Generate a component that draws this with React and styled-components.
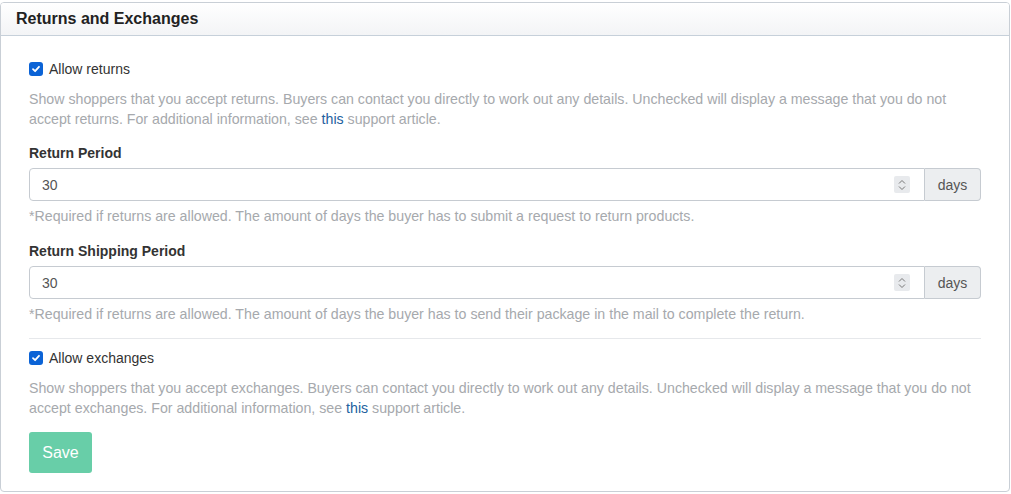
import React from 'react'
import styled, { createGlobalStyle } from 'styled-components'

const Global = createGlobalStyle`
  body { margin: 0; font-family: "Liberation Sans", Arial, sans-serif; background: #fff; }
`

const Card = styled.div`
  margin: 2px 0 0 0;
  width: 1010px;
  height: 490px;
  border: 1px solid #c9cfd6;
  border-radius: 4px;
  box-sizing: border-box;
  overflow: hidden;
`

const Header = styled.div`
  height: 33px;
  box-sizing: border-box;
  padding: 0 15px;
  display: flex;
  align-items: center;
  font-size: 16px;
  font-weight: bold;
  color: #222;
  background: linear-gradient(#ffffff, #f3f4f6);
  border-bottom: 1px solid #c6d0da;
`

const Body = styled.div`
  padding: 23px 28px 0 28px;
  display: flex;
  flex-direction: column;
`

const CheckRow = styled.label`
  display: flex;
  align-items: center;
  gap: 6px;
  font-size: 14px;
  color: #333;
  height: 20px;
`

const Box = styled.span`
  width: 14px;
  height: 14px;
  border-radius: 3px;
  background: #0b63d6;
  display: flex;
  align-items: center;
  justify-content: center;
`

const Desc = styled.p`
  margin: 10px 0 0 0;
  font-size: 14.2px;
  line-height: 20px;
  color: #a6a9ad;
  a { color: #23619e; text-decoration: none; }
`

const Label = styled.div`
  margin-top: ${p => p.$top}px;
  font-size: 14px;
  font-weight: bold;
  color: #333;
  line-height: 20px;
`

const Group = styled.div`
  display: flex;
  height: 33px;
  margin-top: 5px;
`

const Input = styled.div`
  flex: 1;
  border: 1px solid #c6cbd1;
  border-radius: 4px 0 0 4px;
  display: flex;
  align-items: center;
  justify-content: space-between;
  padding: 0 14px 0 12px;
  font-size: 14px;
  color: #555;
`

const Spin = styled.span`
  width: 16px;
  height: 17px;
  background: #e8eaed;
  border-radius: 2px;
  display: flex;
  align-items: center;
  justify-content: center;
`

const Addon = styled.div`
  width: 56px;
  box-sizing: border-box;
  border: 1px solid #c6cbd1;
  border-left: none;
  border-radius: 0 4px 4px 0;
  background: #eceef0;
  display: flex;
  align-items: center;
  justify-content: center;
  font-size: 14px;
  color: #555;
`

const Help = styled.div`
  margin-top: 5px;
  font-size: 14.2px;
  line-height: 20px;
  color: #a6a9ad;
`

const Rule = styled.hr`
  margin: 14px 0 9px 0;
  border: none;
  border-top: 1px solid #e6e8eb;
`

const Button = styled.button`
  margin-top: 14px;
  width: 63px;
  height: 41px;
  border: none;
  border-radius: 3px;
  background: #68cea8;
  color: #fff;
  font-family: inherit;
  font-size: 16px;
`

function Check({ children }) {
  return (
    <CheckRow>
      <Box>
        <svg width="10" height="10" viewBox="0 0 10 10">
          <path d="M2 5.2 L4.1 7.2 L8 2.8" stroke="#fff" strokeWidth="1.8" fill="none" strokeLinecap="round" strokeLinejoin="round" />
        </svg>
      </Box>
      {children}
    </CheckRow>
  )
}

function NumberField({ value }) {
  return (
    <Group>
      <Input>
        {value}
        <Spin>
          <svg width="8" height="12" viewBox="0 0 8 12">
            <path d="M1 4.5 L4 1.5 L7 4.5 M1 7.5 L4 10.5 L7 7.5" stroke="#777" strokeWidth="1" fill="none" />
          </svg>
        </Spin>
      </Input>
      <Addon>days</Addon>
    </Group>
  )
}

export default function App() {
  return (
    <Card>
      <Global />
      <Header>Returns and Exchanges</Header>
      <Body>
        <Check>Allow returns</Check>
        <Desc>
          Show shoppers that you accept returns. Buyers can contact you directly to work out any details. Unchecked will display a message that you do not accept returns. For additional information, see <a href="#">this</a> support article.
        </Desc>
        <Label $top={14}>Return Period</Label>
        <NumberField value="30" />
        <Help>*Required if returns are allowed. The amount of days the buyer has to submit a request to return products.</Help>
        <Label $top={15}>Return Shipping Period</Label>
        <NumberField value="30" />
        <Help>*Required if returns are allowed. The amount of days the buyer has to send their package in the mail to complete the return.</Help>
        <Rule />
        <Check>Allow exchanges</Check>
        <Desc>
          Show shoppers that you accept exchanges. Buyers can contact you directly to work out any details. Unchecked will display a message that you do not accept exchanges. For additional information, see <a href="#">this</a> support article.
        </Desc>
        <Button>Save</Button>
      </Body>
    </Card>
  )
}
